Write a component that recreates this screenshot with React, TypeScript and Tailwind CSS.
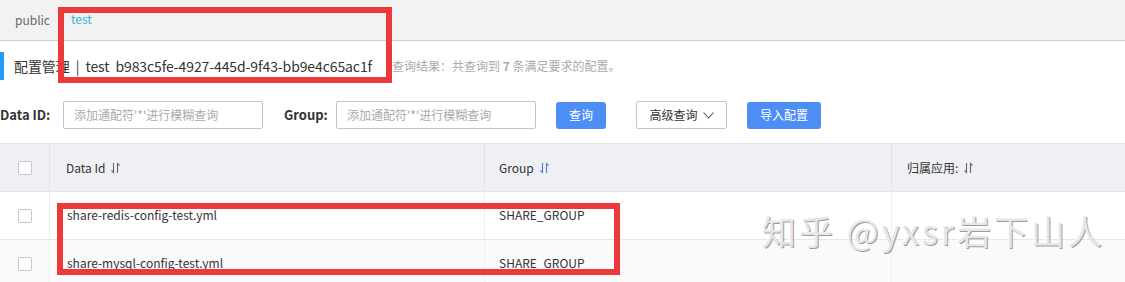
import React from "react";

const SortIcon = ({ active }: { active?: boolean }) => (
  <svg width="9" height="12" viewBox="0 0 9 12" className="ml-[6px] inline-block">
    <path d="M2.5 1v9.5L0.5 8.5" fill="none" stroke={active ? "#5b7be8" : "#666"} strokeWidth="1.1" />
    <path d="M6.5 11V1.5l2 2" fill="none" stroke={active ? "#5b7be8" : "#666"} strokeWidth="1.1" />
  </svg>
);

const Checkbox = () => (
  <div className="size-[14px] rounded-[2px] border border-[#c4c6cf] bg-white" />
);

const rows = [
  { id: "share-redis-config-test.yml", group: "SHARE_GROUP", bg: "bg-white" },
  { id: "share-mysql-config-test.yml", group: "SHARE_GROUP", bg: "bg-[#fafafa]" },
];

export default function App() {
  return (
    <div className="relative h-[282px] w-[1125px] overflow-hidden bg-white font-['Microsoft_YaHei','Noto_Sans_CJK_SC',sans-serif] text-[#333]">
      {/* namespace tabs */}
      <div className="flex h-[41px] items-center border-b border-[#cfcfcf] bg-[#f2f2f2] text-[12px]">
        <span className="ml-[15px] text-[#666]">public</span>
        <span className="ml-[21px] -mt-[2px] text-[#33b3d6]">test</span>
      </div>

      {/* title */}
      <div className="mt-[11px] flex h-[28px] items-center">
        <div className="h-[28px] w-[4px] bg-[#209bfa]" />
        <span className="ml-[10px] text-[14px] leading-none tracking-[-0.1px]">配置管理 &nbsp;|&nbsp; test&nbsp; b983c5fe-4927-445d-9f43-bb9e4c65ac1f</span>
        <span className="ml-[20px] text-[12px] leading-none text-[#aaa]">
          查询结果：共查询到 <b className="font-bold">7</b> 条满足要求的配置。
        </span>
      </div>

      {/* search bar */}
      <div className="mt-[21px] flex h-[28px] items-center text-[12px]">
        <span className="w-[63px] text-[13px] font-bold">Data ID:</span>
        <div className="flex h-[28px] w-[200px] items-center rounded-[2px] border border-[#c4c6cf] px-[10px] text-[#aaa]">添加通配符'*'进行模糊查询</div>
        <span className="ml-[21px] w-[52px] text-[13px] font-bold">Group:</span>
        <div className="flex h-[28px] w-[200px] items-center rounded-[2px] border border-[#c4c6cf] px-[10px] text-[#aaa]">添加通配符'*'进行模糊查询</div>
        <button className="ml-[20px] h-[27px] w-[50px] rounded-[3px] bg-[#4d8ef5] text-white">查询</button>
        <button className="ml-[30px] flex h-[28px] w-[91px] items-center justify-center gap-[5px] rounded-[2px] border border-[#c4c6cf] bg-white">
          高级查询
          <svg width="11" height="7" viewBox="0 0 11 7"><path d="M0.5 0.5l5 5.5 5-5.5" fill="none" stroke="#555" strokeWidth="1.1" /></svg>
        </button>
        <button className="ml-[20px] h-[27px] w-[74px] rounded-[3px] bg-[#4d8ef5] text-white">导入配置</button>
      </div>

      {/* table */}
      <div className="mt-[14px] border-t border-[#e3e5ea] text-[12px]">
        <div className="grid h-[47px] grid-cols-[50px_435px_407px_1fr] bg-[#eef0f4]">
          <div className="flex items-center justify-center border-r border-[#e0e2e7]"><Checkbox /></div>
          <div className="flex items-center border-r border-[#e0e2e7] pl-[16px]">Data Id<SortIcon /></div>
          <div className="flex items-center border-r border-[#e0e2e7] pl-[14px]">Group<SortIcon active /></div>
          <div className="flex items-center pl-[15px]">归属应用:<SortIcon /></div>
        </div>
        {rows.map((r) => (
          <div key={r.id} className={`grid h-[48px] grid-cols-[50px_435px_407px_1fr] border-t border-[#e6e6e6] ${r.bg}`}>
            <div className="flex items-center justify-center border-r border-[#eceef2]"><Checkbox /></div>
            <div className="-mt-[1px] flex items-center border-r border-[#eceef2] pl-[17px]">{r.id}</div>
            <div className="-mt-[1px] flex items-center border-r border-[#eceef2] pl-[14px]">{r.group}</div>
            <div />
          </div>
        ))}
      </div>

      {/* annotation boxes */}
      <div className="absolute left-[58px] top-[7px] h-[76px] w-[334px] border-[6px] border-[#ec3a3c]" />
      <div className="absolute left-[57px] top-[203px] h-[72px] w-[563px] border-[6px] border-[#ec3a3c]" />

      {/* watermark */}
      <div className="absolute left-[762px] top-[214px] text-[34px] leading-none tracking-[3px] text-[#e6e6e6] [text-shadow:1px_1px_0_#9c9c9c,-1px_-1px_0_#ffffff]">
        知乎 @yxsr岩下山人
      </div>
    </div>
  );
}
